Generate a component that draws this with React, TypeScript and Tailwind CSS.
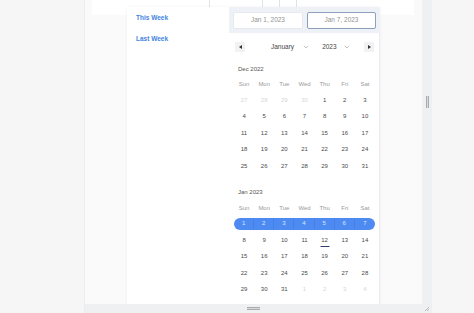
import React from 'react'

const WEEKDAYS = ['Sun', 'Mon', 'Tue', 'Wed', 'Thu', 'Fri', 'Sat']

type Day = { n: number; muted?: boolean; today?: boolean }

const dec2022: Day[][] = [
  [{ n: 27, muted: true }, { n: 28, muted: true }, { n: 29, muted: true }, { n: 30, muted: true }, { n: 1 }, { n: 2 }, { n: 3 }],
  [4, 5, 6, 7, 8, 9, 10].map((n) => ({ n })),
  [11, 12, 13, 14, 15, 16, 17].map((n) => ({ n })),
  [18, 19, 20, 21, 22, 23, 24].map((n) => ({ n })),
  [25, 26, 27, 28, 29, 30, 31].map((n) => ({ n })),
]

const jan2023: Day[][] = [
  [1, 2, 3, 4, 5, 6, 7].map((n) => ({ n })),
  [8, 9, 10, 11, 12, 13, 14].map((n) => ({ n, today: n === 12 })),
  [15, 16, 17, 18, 19, 20, 21].map((n) => ({ n })),
  [22, 23, 24, 25, 26, 27, 28].map((n) => ({ n })),
  [{ n: 29 }, { n: 30 }, { n: 31 }, { n: 1, muted: true }, { n: 2, muted: true }, { n: 3, muted: true }, { n: 4, muted: true }],
]

function Month({ label, weeks, selectedRow, className = '' }: { label: string; weeks: Day[][]; selectedRow?: number; className?: string }) {
  return (
    <div className={className}>
      <div className="h-[16px] flex items-center pl-[9px] text-[6px] text-[#555]">{label}</div>
      <div className="grid grid-cols-7 w-[141px] ml-[5px] h-[15px] items-center text-[6px] text-[#9a9a9a] text-center">
        {WEEKDAYS.map((d) => (
          <span key={d}>{d}</span>
        ))}
      </div>
      {weeks.map((week, i) => {
        const selected = i === selectedRow
        return (
          <div key={i} className="h-[16.5px] flex items-center">
            <div
              className={
                selected
                  ? 'grid grid-cols-7 w-[141px] ml-[5px] h-[12px] rounded-full bg-[#4d8bf2] overflow-hidden'
                  : 'grid grid-cols-7 w-[141px] ml-[5px] h-[12px]'
              }
            >
              {week.map((d, j) => (
                <div
                  key={j}
                  className={
                    selected
                      ? 'flex items-center justify-center text-[6px] text-[#dce8fd] border-r border-[#4580e6] last:border-r-0'
                      : 'relative flex items-center justify-center text-[6px] ' +
                        (d.muted ? 'text-[#d6d6d6]' : 'text-[#4a4a4a]')
                  }
                >
                  {d.n}
                  {d.today && <span className="absolute left-1/2 -translate-x-1/2 bottom-[-1px] w-[9px] h-[1.5px] bg-[#2d3b6e]" />}
                </div>
              ))}
            </div>
          </div>
        )
      })}
    </div>
  )
}

function Chevron({ className = '' }: { className?: string }) {
  return (
    <svg width="6" height="4" viewBox="0 0 6 4" className={className}>
      <path d="M0.8 0.8 L3 3 L5.2 0.8" fill="none" stroke="#aaa" strokeWidth="0.7" />
    </svg>
  )
}

export default function App() {
  return (
    <div className="w-[474px] h-[313px] overflow-hidden bg-[#f6f6f7] flex font-['Liberation_Sans',Arial,sans-serif]">
      <div className="w-[85px] shrink-0 border-r border-[#ececee]" />

      {/* --- PREVIEW FRAME --- */}
      <div className="w-[347px] shrink-0 flex flex-col">
        <div className="flex h-[304px]">
          <div className="relative w-[337px] h-full bg-[#fafafb] overflow-hidden">
            {/* card behind */}
            <div className="ml-[7px] w-[322px] h-[15px] bg-white" />

            {/* trigger */}
            <div className="absolute left-[124px] top-0 w-[88px] h-[8px] flex bg-white border border-t-0 border-[#dfe2e6]">
              <div className="w-[53px] border-r border-[#dfe2e6]" />
              <div className="w-[17px] border-r border-[#dfe2e6]" />
              <div className="flex-1" />
            </div>

            {/* --- POPOVER --- */}
            <div className="absolute left-[42px] top-[7px] w-[253px] h-[300px] bg-white flex shadow-[0_0_3px_rgba(0,0,0,0.06)] border-r border-[#ebedf0]">
              <div className="w-[102px] shrink-0 pl-[9px] pt-[6px] flex flex-col gap-[12px] text-[6.5px] font-bold text-[#4383e0]">
                <span className="h-[9px] leading-[9px]">This Week</span>
                <span className="h-[9px] leading-[9px]">Last Week</span>
              </div>

              <div className="w-[151px] shrink-0">
                <div className="h-[26px] bg-[#eef2f7] flex items-center gap-[4px] px-[4px]">
                  <div className="w-[70px] h-[17px] bg-white rounded-[2px] border border-[#e6eaf0] flex items-center justify-center text-[6.5px] text-[#939393]">
                    Jan 1, 2023
                  </div>
                  <div className="w-[69px] h-[17px] bg-white rounded-[2px] border border-[#8c9fbd] flex items-center justify-center text-[6.5px] text-[#939393]">
                    Jan 7, 2023
                  </div>
                </div>

                <div className="h-[28px] flex items-center px-[6px]">
                  <div className="w-[10px] h-[10px] bg-[#f1f2f4] rounded-[1px] flex items-center justify-center">
                    <span className="w-0 h-0 border-y-[2px] border-y-transparent border-r-[3px] border-r-[#333]" />
                  </div>
                  <div className="flex-1 flex items-center pl-[26px] text-[6.5px] text-[#444]">
                    <span>January</span>
                    <Chevron className="ml-[9px]" />
                    <span className="ml-[13px]">2023</span>
                    <Chevron className="ml-[7px]" />
                  </div>
                  <div className="w-[10px] h-[10px] bg-[#f1f2f4] rounded-[1px] flex items-center justify-center">
                    <span className="w-0 h-0 border-y-[2px] border-y-transparent border-l-[3px] border-l-[#333]" />
                  </div>
                </div>

                <Month label="Dec 2022" weeks={dec2022} />
                <Month label="Jan 2023" weeks={jan2023} selectedRow={0} className="mt-[10px]" />
              </div>
            </div>
          </div>

          {/* right resize strip */}
          <div className="w-[10px] h-full bg-[#eff0f2] flex items-start justify-center pt-[96px]">
            <div className="w-[3px] h-[12px] border-x border-[#a9abb0] bg-[#d9dadd]" />
          </div>
        </div>

        {/* bottom resize strip */}
        <div className="h-[9px] bg-[#eff0f2] flex items-center relative">
          <div className="ml-[162px] w-[13px] h-[3px] border-y border-[#a9abb0] bg-[#d9dadd]" />
          <svg width="6" height="6" viewBox="0 0 6 6" className="absolute right-[2px] bottom-[1px]">
            <path d="M1 5 L5 1 M3 5 L5 3" stroke="#999" strokeWidth="0.6" />
          </svg>
        </div>
      </div>

      <div className="flex-1" />
    </div>
  )
}
